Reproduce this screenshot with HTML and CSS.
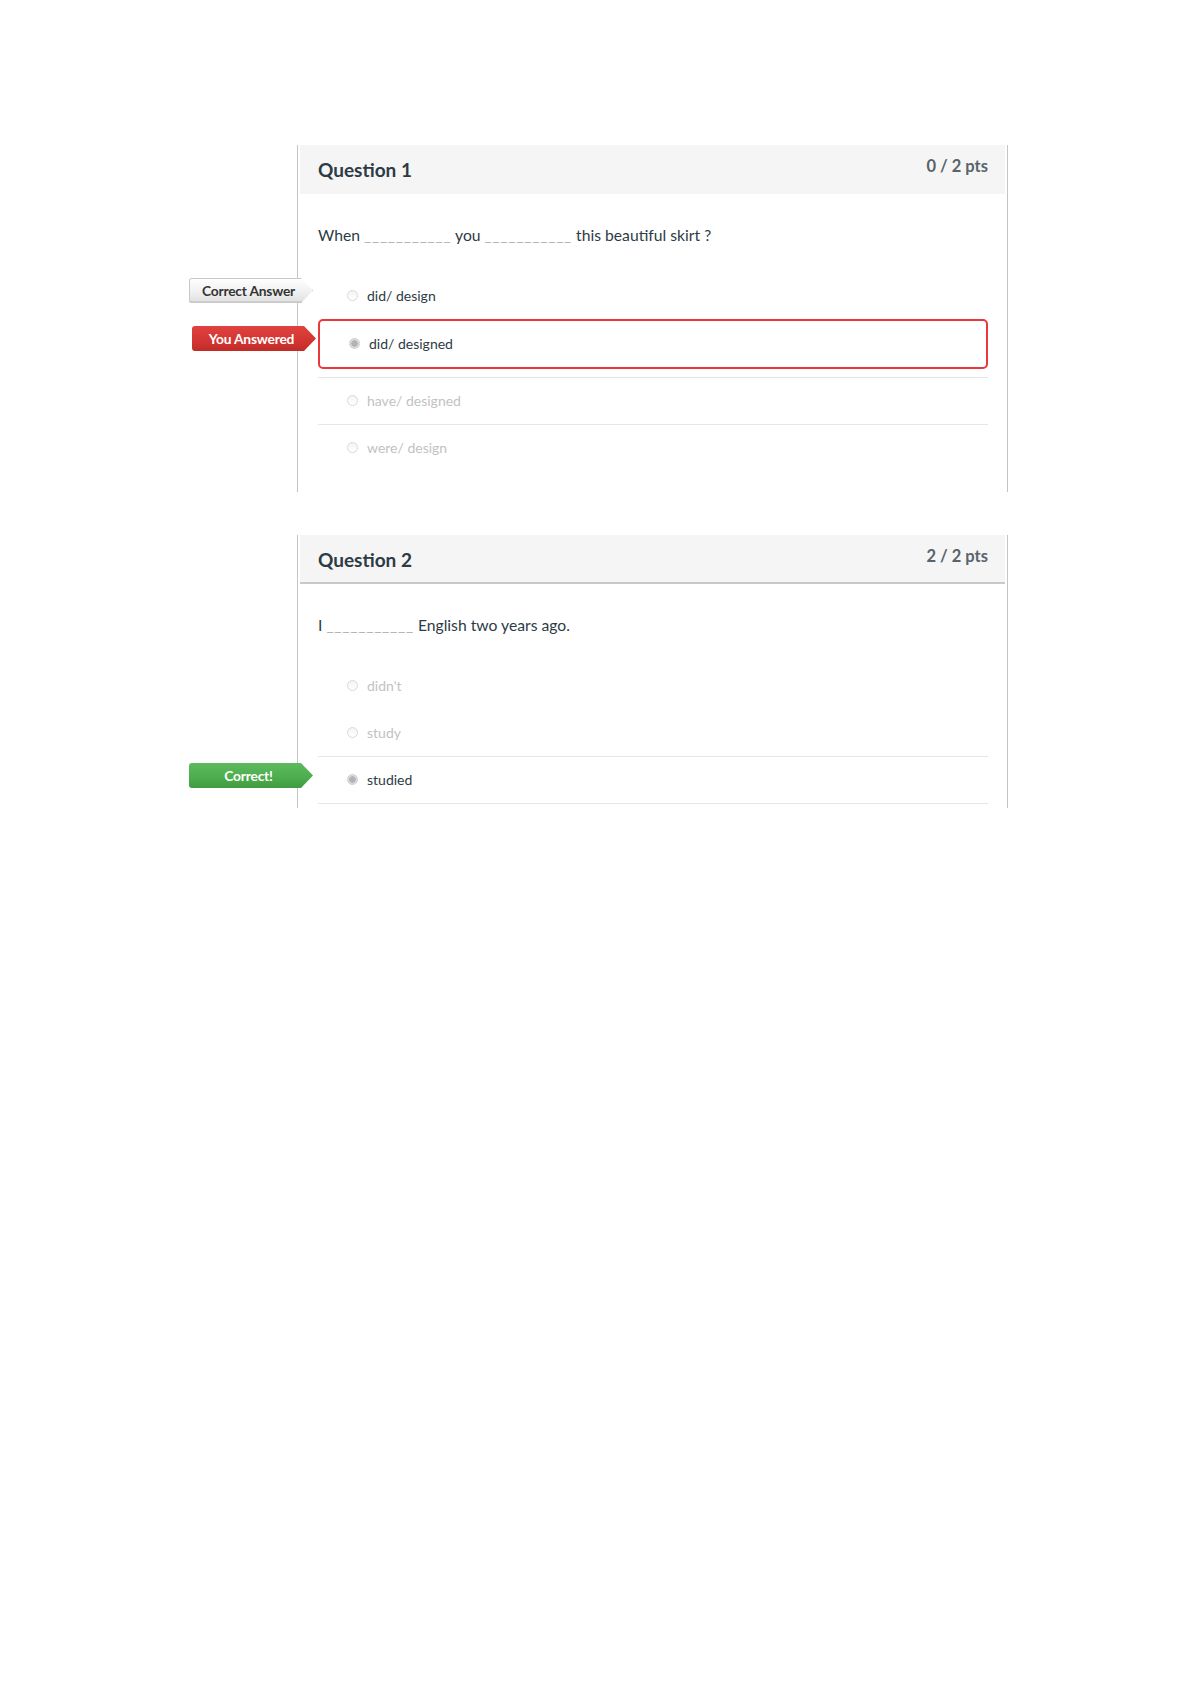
FILE: index.html
```html
<!DOCTYPE html>
<html lang="en">
<head>
<meta charset="utf-8">
<title>Quiz results</title>
<link rel="stylesheet" href="styles.css">
</head>
<body>
<div class="page">
  <section class="question">
    <header class="q-header">
      <h2 class="q-title">Question 1</h2>
      <span class="q-points">0 / 2 pts</span>
    </header>
    <div class="q-body">
      <p class="q-text">When <span class="blank">___________</span> you <span class="blank">___________</span> this beautiful skirt ?</p>
      <div class="answers">
        <div class="answer">
          <span class="tag tag--grey">Correct Answer</span>
          <span class="radio"></span><span class="answer-text">did/ design</span>
        </div>
        <div class="answer answer--wrong">
          <span class="tag tag--red">You Answered</span>
          <span class="radio radio--checked"></span><span class="answer-text">did/ designed</span>
        </div>
        <div class="answer answer--lined answer--faded">
          <span class="radio"></span><span class="answer-text">have/ designed</span>
        </div>
        <div class="answer answer--lined answer--faded">
          <span class="radio"></span><span class="answer-text">were/ design</span>
        </div>
      </div>
    </div>
  </section>

  <section class="question question--cut">
    <header class="q-header q-header--ruled">
      <h2 class="q-title">Question 2</h2>
      <span class="q-points">2 / 2 pts</span>
    </header>
    <div class="q-body">
      <p class="q-text">I <span class="blank">___________</span> English two years ago.</p>
      <div class="answers">
        <div class="answer answer--faded">
          <span class="radio"></span><span class="answer-text">didn't</span>
        </div>
        <div class="answer answer--faded">
          <span class="radio"></span><span class="answer-text">study</span>
        </div>
        <div class="answer answer--lined answer--closed">
          <span class="tag tag--green">Correct!</span>
          <span class="radio radio--checked"></span><span class="answer-text">studied</span>
        </div>
      </div>
    </div>
  </section>
</div>
</body>
</html>
```

FILE: styles.css
```css
* { box-sizing: border-box; }

html, body {
  margin: 0;
  padding: 0;
  background: #ffffff;
}

body {
  font-family: Lato, "Open Sans", "Liberation Sans", sans-serif;
  color: #2d3b45;
  width: 1200px;
  min-height: 1698px;
}

.page {
  padding: 145px 0 0 297px;
}

.question {
  width: 711px;
  border-left: 1px solid #c4c4c4;
  border-right: 1px solid #c4c4c4;
  padding: 0 2px 21px;
  margin-bottom: 43px;
}

.question--cut {
  padding-bottom: 4px;
}

.q-header {
  display: flex;
  justify-content: space-between;
  align-items: flex-start;
  height: 49px;
  padding: 0 17px 0 18px;
  background: #f5f5f5;
}

.q-header--ruled {
  border-bottom: 2px solid #c9c9c9;
}

.q-title {
  margin: 13px 0 0;
  font-size: 19px;
  line-height: 24px;
  font-weight: 700;
  color: #2d3b45;
}

.q-points {
  margin-top: 10px;
  font-size: 16.5px;
  line-height: 22px;
  font-weight: 700;
  color: #58636b;
}

.q-body {
  padding: 31px 17px 0 18px;
}

.q-text {
  margin: 0 0 27px;
  font-size: 15.7px;
  line-height: 20px;
  color: #2d3b45;
}

.blank {
  color: #b5b5b5;
  letter-spacing: 0.75px;
}

.answers {
  display: flex;
  flex-direction: column;
}

.answer {
  position: relative;
  display: flex;
  align-items: center;
  height: 47px;
  border-top: 1px solid transparent;
  padding-left: 29px;
  font-size: 14px;
  color: #2d3b45;
}

.answer--lined {
  border-top-color: #e6e6e6;
}

.answer--closed {
  border-bottom: 1px solid #e6e6e6;
  height: 48px;
}

.answer--wrong {
  height: 50px;
  border: 2px solid #e8383d;
  border-radius: 5px;
  margin-bottom: 8px;
}

.answer--faded {
  color: #c2c2c2;
}

.radio {
  flex: none;
  width: 11px;
  height: 11px;
  margin-right: 9px;
  margin-top: -2px;
  border-radius: 50%;
  border: 1px solid #d9d9d9;
  background: linear-gradient(#f4f4f4, #ffffff);
}

.radio--checked {
  border-color: #cfcfcf;
  background: radial-gradient(circle, #b3b3b3 0 3px, #dcdcdc 3.5px);
}

.answer-text {
  line-height: 20px;
}

.tag {
  position: absolute;
  left: -129px;
  top: 5px;
  width: 124px;
  height: 25px;
  padding-right: 5px;
  display: flex;
  align-items: center;
  justify-content: center;
  font-size: 13.8px;
  font-weight: 700;
  letter-spacing: -0.2px;
  white-space: nowrap;
  border-radius: 3px 0 0 3px;
  clip-path: polygon(0 0, calc(100% - 12px) 0, 100% 50%, calc(100% - 12px) 100%, 0 100%);
}

.answer--wrong .tag {
  left: -128px;
  top: 5px;
}

.answer--closed .tag {
  top: 6px;
}

.tag--grey {
  color: #333333;
  background: linear-gradient(#ffffff 0%, #f1f1f1 55%, #dedede 100%);
  box-shadow: inset 0 0 0 1px #c8c8c8, inset 0 -2px 0 #cfcfcf;
}

.tag--red {
  color: #ffffff;
  background: linear-gradient(#e0433f 0%, #d23531 60%, #bf2c28 100%);
}

.tag--green {
  color: #ffffff;
  background: linear-gradient(#5dba5d 0%, #4cad4c 60%, #3f9b3f 100%);
}
```
